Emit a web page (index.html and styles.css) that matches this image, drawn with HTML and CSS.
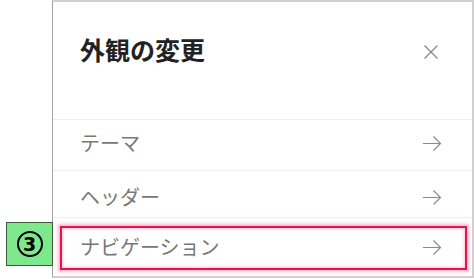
FILE: index.html
```html
<!DOCTYPE html>
<html lang="ja">
<head>
<meta charset="utf-8">
<link rel="stylesheet" href="styles.css">
</head>
<body>
<div class="panel">
  <div class="header">
    <h1 class="title">外観の変更</h1>
    <svg class="close" width="16" height="16" viewBox="0 0 16 16"><path d="M1.5 1.5 L14.5 14.5 M14.5 1.5 L1.5 14.5" stroke="#8a8a8a" stroke-width="1.4" fill="none"/></svg>
  </div>
  <div class="row row1">
    <span class="label">テーマ</span>
    <svg class="arrow" width="20" height="17" viewBox="0 0 20 17"><path d="M1 8.5 H18.5 M11.5 1.5 L18.5 8.5 L11.5 15.5" stroke="#8a8a8a" stroke-width="1.2" fill="none"/></svg>
  </div>
  <div class="row row2">
    <span class="label">ヘッダー</span>
    <svg class="arrow" width="20" height="17" viewBox="0 0 20 17"><path d="M1 8.5 H18.5 M11.5 1.5 L18.5 8.5 L11.5 15.5" stroke="#8a8a8a" stroke-width="1.2" fill="none"/></svg>
  </div>
  <div class="row row3">
    <span class="label">ナビゲーション</span>
    <svg class="arrow" width="20" height="17" viewBox="0 0 20 17"><path d="M1 8.5 H18.5 M11.5 1.5 L18.5 8.5 L11.5 15.5" stroke="#8a8a8a" stroke-width="1.2" fill="none"/></svg>
    <div class="highlight"></div>
  </div>
</div>
<div class="badge"><span class="circled">3</span></div>
</body>
</html>
```
FILE: styles.css
```css
html, body {
  margin: 0;
  padding: 0;
  background: #ffffff;
}
body {
  width: 474px;
  height: 279px;
  position: relative;
  overflow: hidden;
  font-family: "Noto Sans CJK JP", "Noto Sans", sans-serif;
}
.panel {
  margin-left: 52px;
  width: 422px;
  height: 278px;
  box-sizing: border-box;
  border-left: 1px solid #a3a3a3;
  border-top: 2px solid #d0d0d0;
  border-right: 2px solid #d0d0d0;
  border-bottom: 2px solid #d0d0d0;
  display: flex;
  flex-direction: column;
}
.header {
  height: 117px;
  border-bottom: 1px solid #efefef;
  display: flex;
  align-items: flex-start;
  justify-content: space-between;
  padding: 0 33px 0 27px;
}
.title {
  margin: 0;
  padding-top: 32px;
  font-size: 25px;
  line-height: 30px;
  font-weight: 700;
  color: #222222;
}
.close {
  margin-top: 42px;
  display: block;
}
.row {
  display: flex;
  align-items: center;
  justify-content: space-between;
  padding: 0 30px 0 27px;
  position: relative;
}
.row1 {
  height: 50px;
  border-bottom: 1px solid #efefef;
  padding-bottom: 4px;
  box-sizing: border-box;
  height: 51px;
}
.row2 {
  height: 47px;
  box-sizing: border-box;
  border-bottom: 1px solid #efefef;
  padding-top: 6px;
}
.row3 {
  height: 58px;
  box-sizing: border-box;
}
.label {
  font-size: 20px;
  line-height: 26px;
  color: #777777;
  font-weight: 400;
}
.arrow {
  display: block;
}
.highlight {
  position: absolute;
  top: 8px;
  left: 7px;
  right: 5px;
  bottom: 6px;
  border: 2px solid #e3164a;
  box-shadow: 0 0 3px 2px rgba(255, 120, 170, 0.55), inset 0 0 3px 1px rgba(255, 120, 170, 0.45);
}
.badge {
  position: absolute;
  left: 6px;
  top: 222px;
  width: 47px;
  height: 44px;
  box-sizing: border-box;
  background: #7de88c;
  border: 1px solid #3c5a3c;
  display: flex;
  align-items: center;
  justify-content: center;
}
.circled {
  width: 22px;
  height: 22px;
  border: 2px solid #000;
  border-radius: 50%;
  display: flex;
  align-items: center;
  justify-content: center;
  font-family: "DejaVu Sans", sans-serif;
  font-weight: 700;
  font-size: 19px;
  line-height: 1;
  color: #000;
}
```
